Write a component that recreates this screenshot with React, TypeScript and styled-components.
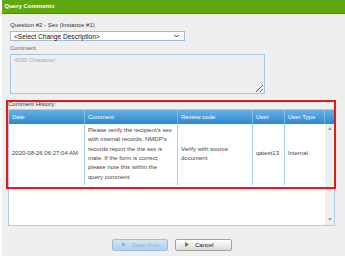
import React from "react";
import styled, { createGlobalStyle } from "styled-components";

const GlobalStyle = createGlobalStyle`
  html, body { margin: 0; padding: 0; background: #fff; }
  body { font-family: "Liberation Sans", Arial, sans-serif; }
`;

const Page = styled.div`
  position: relative;
  margin-left: 2px;
  width: 343px;
  height: 256px;
  background: #efefef;
  overflow: hidden;
`;

const TitleBar = styled.div`
  height: 13px;
  background: #62a70f;
  border-bottom: 1px solid #4f8c0b;
  color: #fff;
  font-weight: bold;
  font-size: 6px;
  line-height: 13px;
  padding-left: 2.5px;
`;

const Form = styled.div`
  padding: 7.5px 0 0 8px;
`;

const Label = styled.div<{ $muted?: boolean }>`
  font-size: 6px;
  line-height: 7px;
  color: ${(p) => (p.$muted ? "#666" : "#333")};
  margin-top: ${(p) => (p.$muted ? "4px" : "0")};
`;

const SelectBox = styled.div`
  margin-top: 2.5px;
  box-sizing: border-box;
  width: 175px;
  height: 10px;
  border: 1px solid #9fbcdb;
  background: #fff;
  display: flex;
  align-items: center;
  justify-content: space-between;
  padding: 0 5px 0 3px;
  font-size: 6.6px;
  color: #111;
`;

const CommentBox = styled.textarea`
  display: block;
  margin-top: 2px;
  box-sizing: border-box;
  width: 255px;
  height: 40px;
  border: 1px solid #a8c5e2;
  background: #efefef;
  padding: 2px 3px;
  font-family: "Liberation Sans", Arial, sans-serif;
  font-size: 6px;
  color: #333;
  outline: none;
  &::placeholder {
    color: #aaa;
  }
`;

const History = styled.div`
  margin: 7px 0 0 6px;
`;

const Grid = styled.div`
  margin-top: 0.5px;
  box-sizing: border-box;
  width: 327px;
  height: 117px;
  border: 1px solid #a9cfe9;
  background: #fff;
  display: flex;
  flex-direction: column;
`;

const cols = "76px 93px 75px 32px 40px";

const HeadRow = styled.div`
  display: grid;
  grid-template-columns: ${cols} 1fr;
  height: 14px;
  background: linear-gradient(#63b1e7, #2f86cd);
`;

const HeadCell = styled.div`
  border-right: 1px solid rgba(255, 255, 255, 0.3);
  color: #fff;
  font-size: 6px;
  display: flex;
  align-items: center;
  padding-left: 3px;
  &:last-child {
    border-right: none;
  }
`;

const BodyArea = styled.div`
  flex: 1;
  display: flex;
`;

const Rows = styled.div`
  flex: 1;
`;

const Row = styled.div`
  display: grid;
  grid-template-columns: ${cols};
`;

const Cell = styled.div<{ $wrap?: boolean }>`
  border-right: 1px solid #a6d0ee;
  color: #444;
  font-size: 6px;
  line-height: 9.4px;
  display: flex;
  align-items: center;
  padding: 2.3px 4.5px 2.3px 3px;
  white-space: ${(p) => (p.$wrap ? "normal" : "nowrap")};
  &:last-child {
    border-right: none;
  }
`;

const ScrollTrack = styled.div`
  width: 9px;
  background: #eeeeee;
  display: flex;
  flex-direction: column;
  justify-content: space-between;
  align-items: center;
  padding: 3px 0 4px;
`;

const Footer = styled.div`
  margin-top: 13px;
  display: flex;
  justify-content: center;
  gap: 7px;
  padding-right: 3px;
`;

const Button = styled.div<{ $disabled?: boolean; $w: number }>`
  box-sizing: border-box;
  width: ${(p) => p.$w}px;
  height: 12px;
  border-radius: 2px;
  border: 1px solid ${(p) => (p.$disabled ? "#9dbfe2" : "#a4a4a4")};
  background: ${(p) =>
    p.$disabled
      ? "linear-gradient(#d3e6f7, #afcfed)"
      : "linear-gradient(#ffffff, #dadada)"};
  color: ${(p) => (p.$disabled ? "#98b2cc" : "#222")};
  font-size: 6px;
  display: flex;
  align-items: center;
  padding-left: 9px;
  gap: 6px;
`;

const Highlight = styled.div`
  position: absolute;
  left: 4px;
  top: 100px;
  width: 330px;
  height: 89px;
  box-sizing: border-box;
  border: 2px solid #e8161d;
  pointer-events: none;
`;

const Play = ({ color }: { color: string }) => (
  <svg width="4" height="5" viewBox="0 0 4 5">
    <path d="M0 0 L4 2.5 L0 5 Z" fill={color} />
  </svg>
);

const Arrow = ({ down }: { down?: boolean }) => (
  <svg width="4" height="3" viewBox="0 0 4 3">
    <path d={down ? "M0 0 L4 0 L2 3 Z" : "M0 3 L4 3 L2 0 Z"} fill="#a0a0a0" />
  </svg>
);

export default function App() {
  return (
    <>
      <GlobalStyle />
      <Page>
        <TitleBar>Query Comments</TitleBar>
        <Form>
          <Label>Question #2 - Sex (Instance #1)</Label>
          <SelectBox>
            <span>&lt;Select Change Description&gt;</span>
            <svg width="5" height="4" viewBox="0 0 5 4">
              <path d="M0.5 1 L2.5 3 L4.5 1" stroke="#333" strokeWidth="1" fill="none" />
            </svg>
          </SelectBox>
          <Label $muted>Comment</Label>
          <CommentBox placeholder="4000 Character" />
        </Form>
        <History>
          <Label>Comment History:</Label>
          <Grid>
            <HeadRow>
              <HeadCell>Date</HeadCell>
              <HeadCell>Comment</HeadCell>
              <HeadCell>Review code</HeadCell>
              <HeadCell>User</HeadCell>
              <HeadCell>User Type</HeadCell>
              <HeadCell />
            </HeadRow>
            <BodyArea>
              <Rows>
                <Row>
                  <Cell>2020-08-26 06:27:04 AM</Cell>
                  <Cell $wrap>
                    Please verify the recipient's sex with internal records. NMDP's records
                    report the the sex is male. If the form is correct, please note this
                    within the query comment.
                  </Cell>
                  <Cell $wrap>Verify with source document</Cell>
                  <Cell>qatest13</Cell>
                  <Cell>Internal</Cell>
                </Row>
              </Rows>
              <ScrollTrack>
                <Arrow />
                <Arrow down />
              </ScrollTrack>
            </BodyArea>
          </Grid>
        </History>
        <Footer>
          <Button $disabled $w={56}>
            <Play color="#98b2cc" />
            Save Now
          </Button>
          <Button $w={57}>
            <Play color="#4c9a12" />
            Cancel
          </Button>
        </Footer>
        <Highlight />
      </Page>
    </>
  );
}
